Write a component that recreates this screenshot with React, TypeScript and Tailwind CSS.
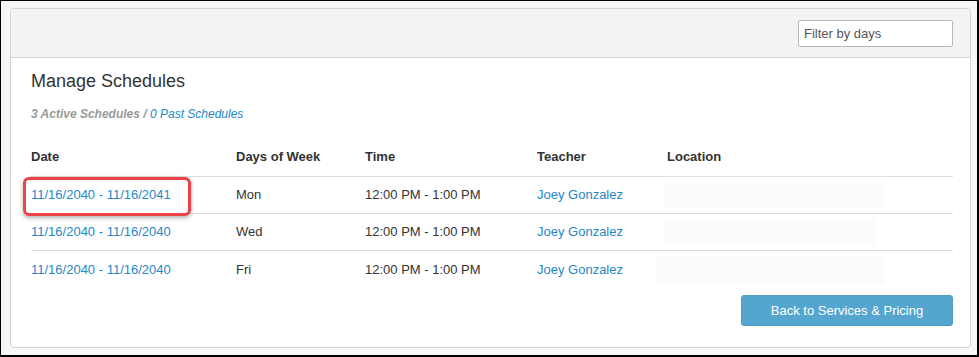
import React from 'react'

interface Row {
  date: string
  day: string
  time: string
  teacher: string
  loc: string
}

const rows: Row[] = [
  { date: '11/16/2040 - 11/16/2041', day: 'Mon', time: '12:00 PM - 1:00 PM', teacher: 'Joey Gonzalez', loc: 'ml-[-2px] w-[220px] h-[24px]' },
  { date: '11/16/2040 - 11/16/2040', day: 'Wed', time: '12:00 PM - 1:00 PM', teacher: 'Joey Gonzalez', loc: 'ml-[-2px] w-[210px] h-[25px]' },
  { date: '11/16/2040 - 11/16/2040', day: 'Fri', time: '12:00 PM - 1:00 PM', teacher: 'Joey Gonzalez', loc: 'ml-[-11px] w-[229px] h-[30px]' },
]

export default function App() {
  return (
    <div
      className="w-[979px] h-[357px] box-border border-l border-t border-r-2 border-b-2 border-black bg-[#f7f7f7] pt-[7px] pl-[9px] text-[#333]"
      style={{ fontFamily: '"Liberation Sans", Arial, sans-serif' }}
    >
      {/* 面板 */}
      <div className="w-[961px] h-[340px] box-border border border-[#d4d4d4] rounded-[4px] bg-white overflow-hidden flex flex-col">
        {/* 顶部过滤条 */}
        <div className="h-[49px] shrink-0 bg-[#f2f3f5] border-b border-[#d4d4d4] flex items-center justify-end pr-[17px]">
          <input
            type="text"
            placeholder="Filter by days"
            className="w-[155px] h-[27px] box-border border border-[#b9b9b9] rounded-[2px] bg-white px-[5px] text-[13px] text-[#555] placeholder:text-[#555] outline-none"
          />
        </div>

        <div className="pl-[20px] pr-[17px] flex flex-col">
          <h1 className="mt-[13px] text-[18px] leading-[20px] font-normal">Manage Schedules</h1>
          <p className="mt-[15px] text-[12px] leading-[16px] italic">
            <span className="font-bold text-[#999]">3 Active Schedules / </span>
            <a className="text-[#2488c8]">0 Past Schedules</a>
          </p>

          {/* 表格 */}
          <div className="relative flex flex-col text-[13px] leading-[18px]">
            <div className="h-[55px] grid grid-cols-[205px_129px_172px_130px_1fr] items-end pb-[10px] border-b border-[#dddddd] font-bold">
              <div>Date</div>
              <div>Days of Week</div>
              <div>Time</div>
              <div>Teacher</div>
              <div>Location</div>
            </div>
            {rows.map((r, i) => (
              <div
                key={i}
                className={
                  i < rows.length - 1
                    ? 'h-[37px] grid grid-cols-[205px_129px_172px_130px_1fr] items-center border-b border-[#dddddd]'
                    : 'h-[37px] grid grid-cols-[205px_129px_172px_130px_1fr] items-center'
                }
              >
                <a className="text-[#2488c8]">{r.date}</a>
                <div>{r.day}</div>
                <div>{r.time}</div>
                <a className="text-[#2488c8]">{r.teacher}</a>
                <div className={'bg-[#fbfbfb] ' + r.loc} />
              </div>
            ))}

            {/* 标注框 */}
            <div className="absolute left-[-8px] top-[55px] w-[168px] h-[39px] border-[3px] border-[#ef4247] rounded-[6px] shadow-[0_2px_4px_rgba(0,0,0,0.3)]" />
          </div>

          <div className="flex justify-end mt-[7px]">
            <button className="w-[212px] h-[31px] rounded-[3px] bg-[#54a6cf] border border-[#4d9ec7] text-white text-[13px]">
              Back to Services &amp; Pricing
            </button>
          </div>
        </div>
      </div>
    </div>
  )
}
